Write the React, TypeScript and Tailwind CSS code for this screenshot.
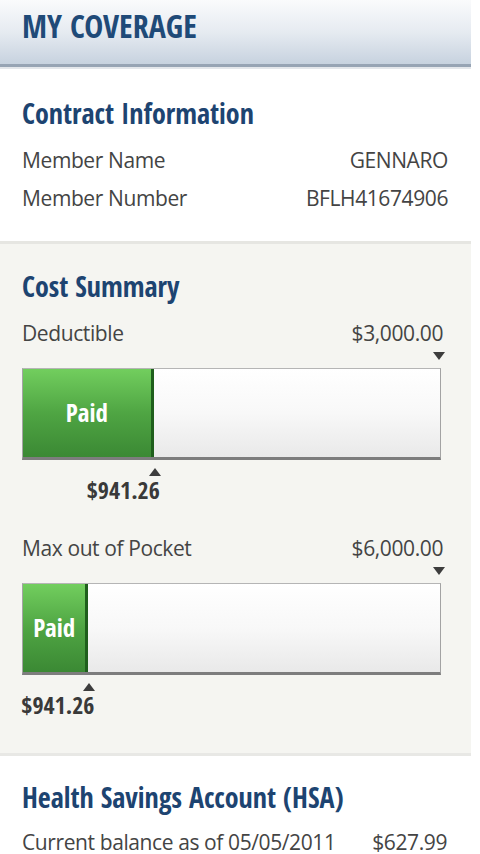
const heading = "font-['Open_Sans_Condensed','Open_Sans',sans-serif] font-bold text-[#1d4471]";
const body = "font-['Open_Sans',sans-serif] text-[21px] leading-[38px] tracking-[-0.4px] text-[#444]";

type Meter = {
  label: string;
  max: number;
  paid: number;
};

const meters: Meter[] = [
  { label: "Deductible", max: 3000, paid: 941.26 },
  { label: "Max out of Pocket", max: 6000, paid: 941.26 },
];

const money = (n: number) =>
  "$" + n.toLocaleString("en-US", { minimumFractionDigits: 2, maximumFractionDigits: 2 });

const Row = ({ name, value, className = "" }: { name: string; value: string; className?: string }) => (
  <div className={`flex justify-between ${body}`}>
    <span>{name}</span>
    <span className={className}>{value}</span>
  </div>
);

const CostMeter = ({ meter }: { meter: Meter }) => {
  const pct = Math.min(100, (meter.paid / meter.max) * 100);
  return (
    <div className="flex flex-col">
      <Row name={meter.label} value={money(meter.max)} className="mr-[-2px]" />
      <div className="flex h-[16px] justify-end">
        <div className="mr-[-4px] h-0 w-0 border-x-[6px] border-t-[8px] border-x-transparent border-t-[#3d3d3d]" />
      </div>
      {/* bar */}
      <div className="flex h-[92px] border-x border-t border-b-[3px] border-x-[#a3a3a3] border-t-[#b5b5b5] border-b-[#7d7d7d]">
        <div
          className="flex items-center justify-center border-r-[3px] border-r-[#1f5f1c] bg-gradient-to-b from-[#72ce5e] via-[#4fa543] to-[#3b8934]"
          style={{ width: `${pct}%` }}
        >
          <span className="font-['Open_Sans_Condensed','Open_Sans',sans-serif] text-[25px] font-bold text-white">Paid</span>
        </div>
        <div className="flex-1 bg-gradient-to-b from-white via-[#f8f8f8] to-[#e9e9e9]" />
      </div>
      <div className="flex px-px">
        <div className="flex flex-col items-end" style={{ width: `${pct}%` }}>
          <div className="mt-[8px] mr-[-7px] h-0 w-0 border-x-[6px] border-b-[8px] border-x-transparent border-b-[#3d3d3d]" />
          <span className="mr-[-6px] whitespace-nowrap font-['Open_Sans_Condensed','Open_Sans',sans-serif] text-[24px] font-bold leading-[28px] text-[#393939]">
            {money(meter.paid)}
          </span>
        </div>
      </div>
    </div>
  );
};

export default function App() {
  return (
    <div className="flex min-h-[854px] bg-white">
      <div className="flex w-[471px] flex-col">
        {/* header */}
        <div className="h-[67px] border-b-[3px] border-b-[#97a4b4] bg-gradient-to-b from-[#fafbfc] via-[#e6ebf1] to-[#c7d2df] px-[22px] pt-[6px]">
          <h1 className={`${heading} text-[32px] leading-[40px] text-[#1f4a78]`}>MY COVERAGE</h1>
        </div>
        <div className="h-[2px] bg-[#e4e7eb]" />

        {/* contract information */}
        <section className="bg-white pt-[26px] pb-[24px] pl-[22px] pr-[23px]">
          <h2 className={`${heading} text-[28px] leading-[36px]`}>Contract Information</h2>
          <div className="mt-[10px]">
            <Row name="Member Name" value="GENNARO" />
            <Row name="Member Number" value="BFLH41674906" />
          </div>
        </section>

        {/* cost summary */}
        <section className="border-t-[3px] border-t-[#e6e6e2] bg-[#f5f5f1] pt-[24px] pb-[34px] pl-[22px] pr-[30px]">
          <h2 className={`${heading} text-[28px] leading-[36px]`}>Cost Summary</h2>
          <div className="mt-[10px] flex flex-col gap-[25px]">
            {meters.map((m) => (
              <CostMeter key={m.label} meter={m} />
            ))}
          </div>
        </section>

        {/* hsa */}
        <section className="flex-1 border-t-[3px] border-t-[#e8e8e5] bg-white pt-[23px] pl-[22px] pr-[24px]">
          <h2 className={`${heading} text-[28px] leading-[36px]`}>Health Savings Account (HSA)</h2>
          <div className="mt-[8px]">
            <Row name="Current balance as of 05/05/2011" value="$627.99" />
          </div>
        </section>
      </div>
    </div>
  );
}
